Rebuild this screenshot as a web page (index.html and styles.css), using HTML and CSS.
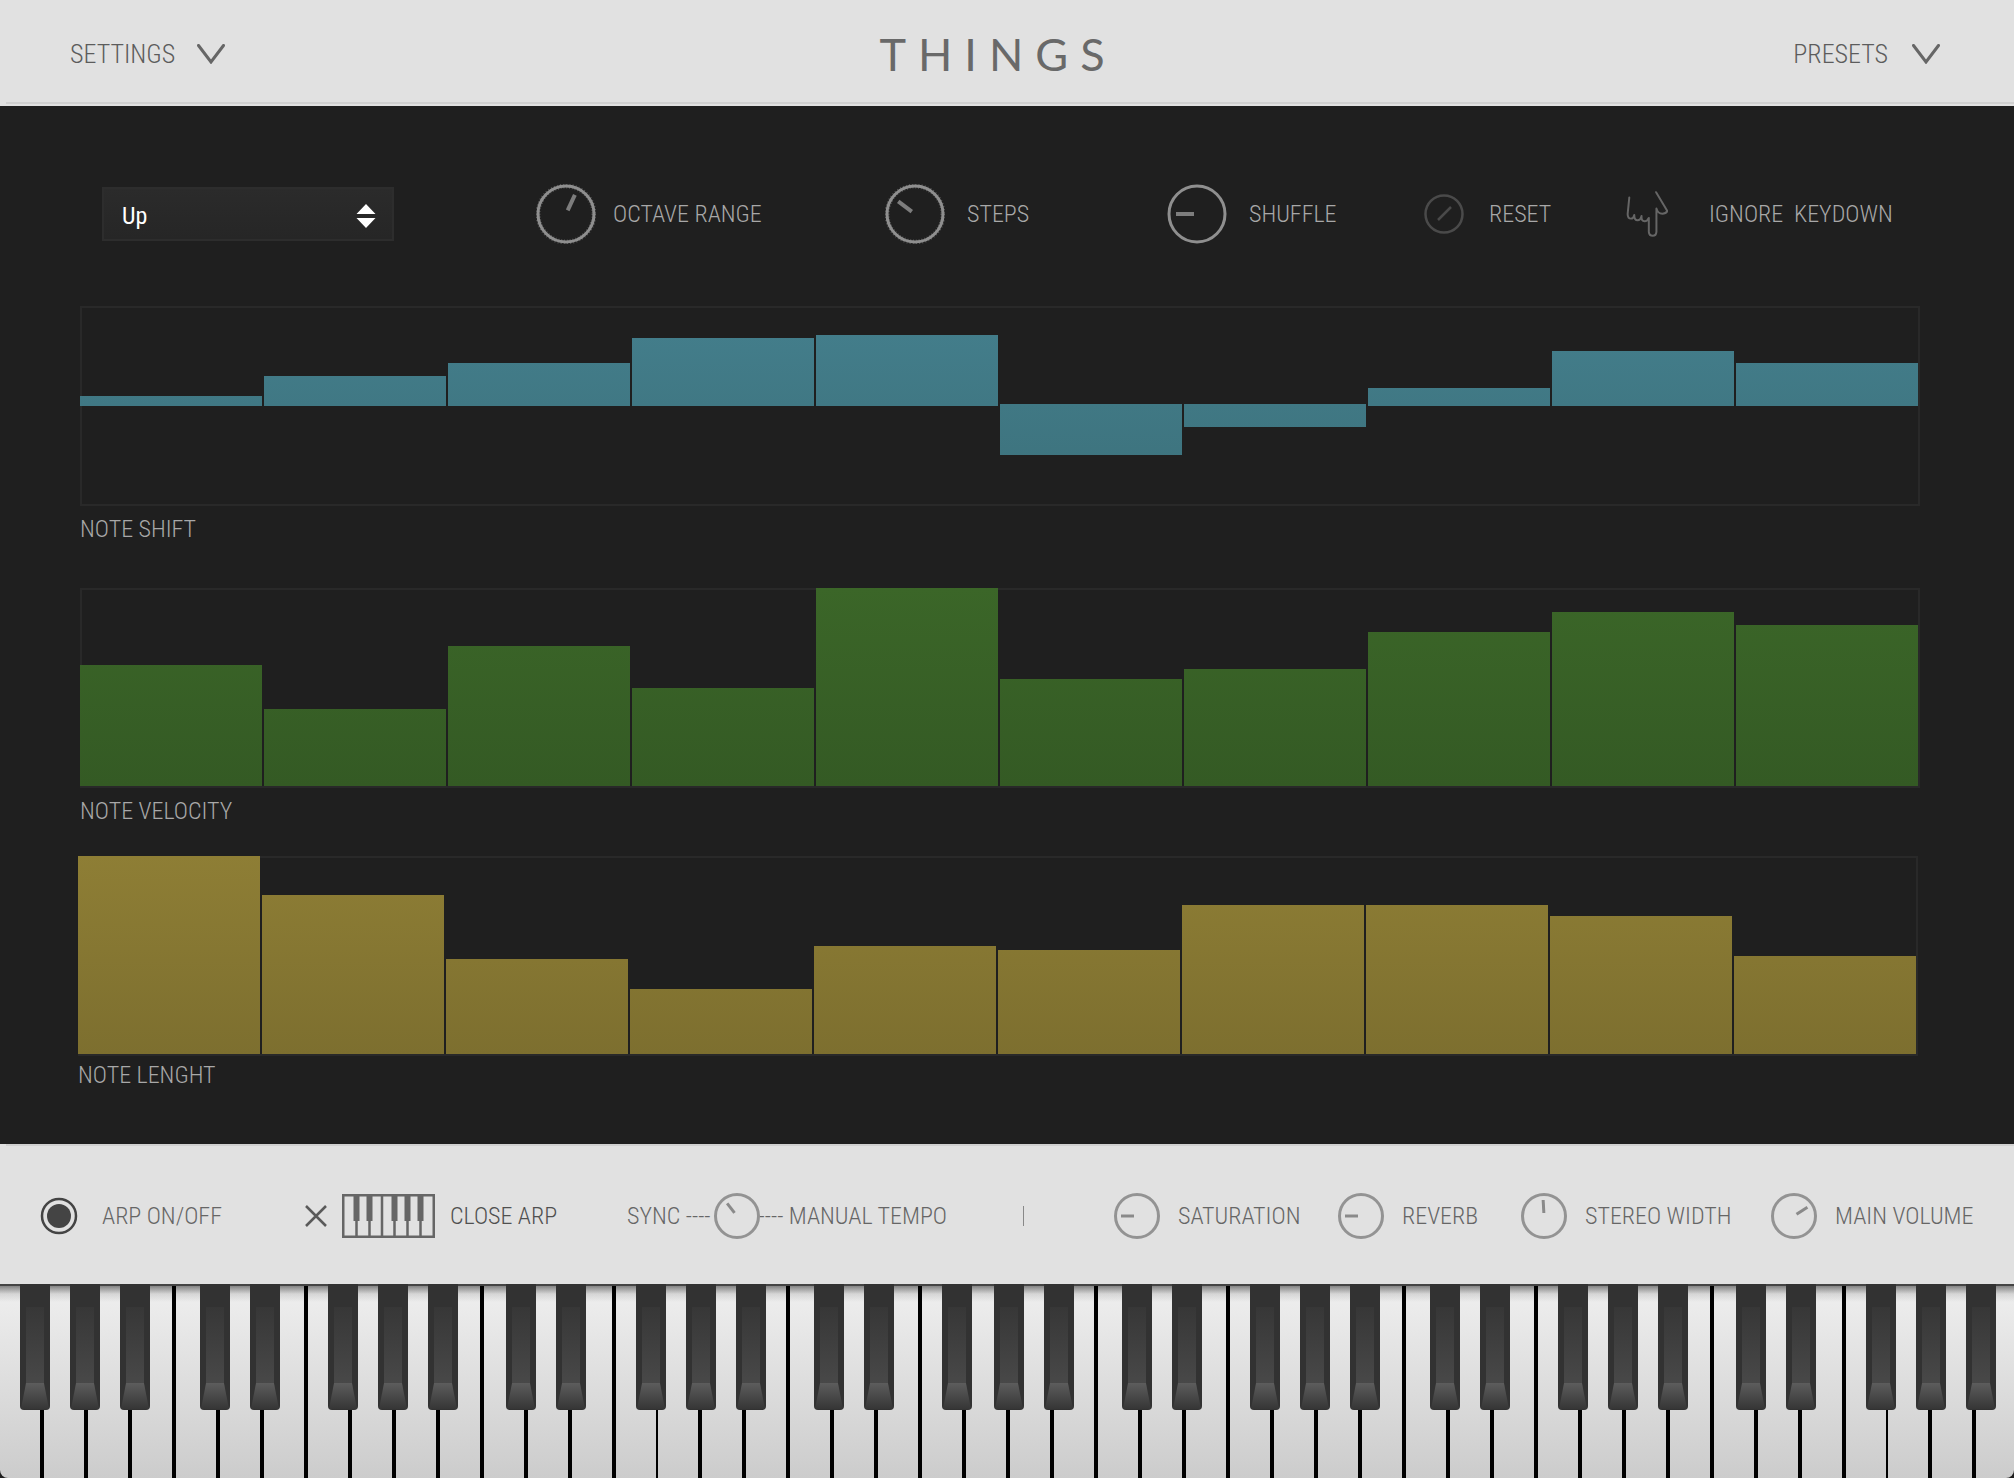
FILE: index.html
```html
<!DOCTYPE html>
<html lang="en">
<head>
  <meta charset="UTF-8">
  <meta name="viewport" content="width=device-width, initial-scale=1.0">
  <title>Things</title>
  <link rel="stylesheet" href="styles.css">
</head>
<body>
  <header class="topbar">
    <button class="menu" type="button">
      SETTINGS
      <svg class="chevron" viewBox="0 0 28 20"><path d="M1.5 1.5 L14 18 L26.5 1.5"/></svg>
    </button>
    <h1 class="logo">THINGS</h1>
    <button class="menu menu-right" type="button">
      PRESETS
      <svg class="chevron" viewBox="0 0 28 20"><path d="M1.5 1.5 L14 18 L26.5 1.5"/></svg>
    </button>
  </header>

  <main class="arp">
    <div class="controls">
      <div class="select-box">
        <select class="mode" aria-label="Mode">
          <option>Up</option>
          <option>Down</option>
        </select>
        <svg class="select-arrows" viewBox="0 0 20 26">
          <path d="M10 1 L19.5 11 H0.5 Z M10 25 L19.5 15 H0.5 Z"/>
        </svg>
      </div>

      <label class="control">
        <span class="dial">
          <svg class="knob" viewBox="-30 -30 60 60">
            <circle r="28"/><circle class="teeth" r="28"/>
            <line y1="-21" y2="-4" transform="rotate(25)"/>
          </svg>
          <input type="range" min="0" max="100" value="60">
        </span>
        OCTAVE RANGE
      </label>

      <label class="control control-wide">
        <span class="dial">
          <svg class="knob" viewBox="-30 -30 60 60">
            <circle r="28"/><circle class="teeth" r="28"/>
            <line y1="-21" y2="-4" transform="rotate(-53)"/>
          </svg>
          <input type="range" min="0" max="100" value="25">
        </span>
        STEPS
      </label>

      <label class="control control-wide">
        <span class="dial">
          <svg class="knob" viewBox="-30 -30 60 60">
            <circle r="28"/>
            <line y1="-21" y2="-3" transform="rotate(-90)"/>
          </svg>
          <input type="range" min="0" max="100" value="0">
        </span>
        SHUFFLE
      </label>

      <button class="control control-reset" type="button">
        <svg class="reset-icon" viewBox="-20 -20 40 40">
          <circle r="18.5"/><line x1="-6" y1="6" x2="7" y2="-7"/>
        </svg>
        RESET
      </button>

      <label class="control control-hand">
        <span class="dial">
          <svg class="hand-icon" viewBox="643 34 130 144">
            <path d="M656 56 L651 106 Q651 120 661 120 Q669 120 671 109 Q671 125 681 125 Q690 125 693 112 Q692 128 702 128 Q711 128 715 118 V160 Q716 172 727 172 Q737 172 738 160 V89 Q742 105 756 105 Q767 105 771 97 L737 40"/>
          </svg>
          <input type="checkbox">
        </span>
        <span class="keep">IGNORE  KEYDOWN</span>
      </label>
    </div>

    <section class="lane">
      <div class="chart chart-shift" id="shift"></div>
      <h2>NOTE SHIFT</h2>
    </section>

    <section class="lane">
      <div class="chart chart-velocity" id="velocity"></div>
      <h2>NOTE VELOCITY</h2>
    </section>

    <section class="lane lane-length">
      <div class="chart chart-length" id="length"></div>
      <h2>NOTE LENGHT</h2>
    </section>
  </main>

  <footer class="bottombar">
    <label class="control control-arp">
      <span class="dial">
        <svg class="power-icon" viewBox="-19 -19 38 38">
          <circle class="ring" r="17"/><circle r="12"/>
        </svg>
        <input type="checkbox" checked>
      </span>
      ARP ON/OFF
    </label>

    <button class="control control-close" type="button">
      <svg class="close-icon" viewBox="0 0 22 22"><path d="M1 1 L21 21 M21 1 L1 21"/></svg>
      <svg class="piano-icon" viewBox="0 0 93 44">
        <rect x="1.25" y="1.25" width="90.5" height="41.5"/>
        <path d="M14.5 1 V43 M27.5 1 V43 M40 1 V43 M52.5 1 V43 M65.5 1 V43 M78.5 1 V43"/>
        <path class="sharps" d="M14.5 1 V27 M27.5 1 V27 M52.5 1 V27 M65.5 1 V27 M78.5 1 V27"/>
      </svg>
      CLOSE ARP
    </button>

    <label class="control control-tempo">
      <span>SYNC ----</span>
      <span class="dial">
        <svg class="knob knob-small" viewBox="-24 -24 48 48">
          <circle r="21.5"/><line y1="-16" y2="-4" transform="rotate(-38)"/>
        </svg>
        <input type="range" min="0" max="100" value="35">
      </span>
      <span>---- MANUAL TEMPO</span>
    </label>

    <span class="divider"></span>

    <label class="control">
      <span class="dial">
        <svg class="knob knob-small" viewBox="-24 -24 48 48">
          <circle r="21.5"/><line y1="-16" y2="-3" transform="rotate(-90)"/>
        </svg>
        <input type="range" min="0" max="100" value="0">
      </span>
      SATURATION
    </label>

    <label class="control">
      <span class="dial">
        <svg class="knob knob-small" viewBox="-24 -24 48 48">
          <circle r="21.5"/><line y1="-16" y2="-3" transform="rotate(-90)"/>
        </svg>
        <input type="range" min="0" max="100" value="0">
      </span>
      REVERB
    </label>

    <label class="control">
      <span class="dial">
        <svg class="knob knob-small" viewBox="-24 -24 48 48">
          <circle r="21.5"/><line y1="-16" y2="-3" transform="rotate(-3)"/>
        </svg>
        <input type="range" min="0" max="100" value="50">
      </span>
      STEREO WIDTH
    </label>

    <label class="control">
      <span class="dial">
        <svg class="knob knob-small" viewBox="-24 -24 48 48">
          <circle r="21.5"/><line y1="-16" y2="-3" transform="rotate(57)"/>
        </svg>
        <input type="range" min="0" max="100" value="75">
      </span>
      MAIN VOLUME
    </label>
  </footer>

  <div class="keyboard">
    <div class="white-keys" id="white"></div>
    <div class="black-keys" id="black"></div>
  </div>

  <script src="script.js"></script>
</body>
</html>
```
FILE: styles.css
```css
* {
  box-sizing: border-box;
}

body {
  margin: 0;
  background: #1f1f1f;
  font-family: "Roboto Condensed", Roboto, sans-serif;
  font-size: 24px;
  font-weight: 300;
  line-height: 30px;
}

button {
  padding: 0;
  border: none;
  background: none;
  font: inherit;
  color: inherit;
  cursor: pointer;
}

svg {
  display: block;
  flex: none;
  fill: none;
}

/* top bar */
.topbar {
  display: grid;
  grid-template-columns: 1fr auto 1fr;
  align-items: center;
  height: 106px;
  padding: 2px 74px 0 70px;
  background: linear-gradient(#d0d0d0, #d0d0d0) 6px 102px / 100% 2px no-repeat #e1e1e1;
  color: #5c5c5c;
}

.menu {
  display: flex;
  align-items: center;
  gap: 22px;
  font-size: 26px;
}

.menu-right {
  justify-self: end;
  gap: 24px;
}

.chevron {
  width: 28px;
  height: 20px;
  stroke: #666;
  stroke-width: 3;
  stroke-linecap: round;
}

.logo {
  margin: 0;
  padding-right: 14px;
  font-family: Lato, sans-serif;
  font-size: 45px;
  font-weight: 400;
  line-height: 56px;
  letter-spacing: 12px;
  color: #696969;
}

/* arpeggiator panel */
.arp {
  padding: 78px 0 54px;
  color: #a8a8a8;
}

.controls {
  display: grid;
  grid-template-columns: 434fr 349fr 282fr 257fr 201fr 389fr;
  align-items: center;
  padding-left: 102px;
}

.control {
  display: flex;
  align-items: center;
  gap: 17px;
  white-space: nowrap;
  cursor: pointer;
}

.control-wide {
  gap: 22px;
}

.control-reset {
  gap: 25px;
}

.control-hand {
  gap: 41px;
}

.keep {
  white-space: pre;
}

.select-box {
  position: relative;
  width: 292px;
}

.mode {
  display: block;
  width: 100%;
  height: 54px;
  padding: 4px 18px 0;
  border: 2px solid #2d2d2d;
  border-radius: 0;
  appearance: none;
  background: linear-gradient(#2b2b2b, #262626);
  color: #fff;
  font: inherit;
  font-weight: 400;
}

.select-arrows {
  position: absolute;
  right: 18px;
  top: 16px;
  width: 20px;
  height: 26px;
  fill: #fff;
  pointer-events: none;
}

/* the real input lies invisibly over its drawing */
.dial {
  position: relative;
  flex: none;
}

.dial input {
  position: absolute;
  inset: 0;
  width: 100%;
  height: 100%;
  margin: 0;
  opacity: 0;
  cursor: pointer;
}

.knob {
  width: 60px;
  height: 60px;
  stroke: #8f8f8f;
  stroke-width: 3;
}

.knob line {
  stroke: #7d7d7d;
  stroke-width: 4;
}

.knob .teeth {
  stroke-width: 5;
  stroke-dasharray: 1 2;
  opacity: 0.5;
}

.knob-small {
  width: 48px;
  height: 48px;
  stroke: #939393;
}

.knob-small line {
  stroke: #8a8a8a;
  stroke-width: 3;
}

.reset-icon {
  width: 40px;
  height: 40px;
  stroke: #4a4a4a;
  stroke-width: 2.5;
}

.hand-icon {
  width: 43px;
  height: 48px;
  stroke: #666;
  stroke-width: 6;
  stroke-linecap: round;
  stroke-linejoin: round;
}

/* step charts */
.lane {
  margin: 44px 94px 0 80px;
}

.controls + .lane {
  margin-top: 62px;
}

.lane-length {
  margin: 30px 96px 0 78px;
}

.lane h2 {
  margin: 8px 0 0;
  font: inherit;
}

.lane-length h2 {
  margin-top: 4px;
}

.chart {
  display: grid;
  grid-auto-flow: column;
  grid-auto-columns: 1fr;
  grid-template-rows: 100%;
  align-items: end;
  gap: 2px;
  height: 200px;
  padding: 0 2px 2px 0;
  box-shadow: inset 0 0 0 2px #292929;
}

.bar {
  background-size: 100% 198px;
  background-position: left bottom;
}

.chart-velocity .bar {
  background-image: linear-gradient(#3b6628, #345a24);
}

.chart-length .bar {
  background-image: linear-gradient(#8e7e35, #7d6f2f);
}

.chart-shift .bar {
  margin-bottom: 98px;
  background-image: linear-gradient(#447f8d, #3c717b);
  background-position: left bottom -98px;
}

.chart-shift .bar.down {
  align-self: start;
  margin: 98px 0 0;
  background-position: left top -98px;
}

/* bottom bar */
.bottombar {
  display: grid;
  grid-template-columns: 265fr 322fr 396fr 90fr 224fr 183fr 250fr 244fr;
  align-items: center;
  height: 140px;
  padding: 4px 0 0 40px;
  background: linear-gradient(#d0d0d0, #d0d0d0) 6px 0 / 100% 2px no-repeat #e1e1e1;
  color: #666;
}

.control-arp {
  gap: 24px;
}

.control-close {
  gap: 15px;
  color: #505050;
}

.control-tempo {
  gap: 0;
}

.control-tempo .dial {
  margin: 0 -2px 0 2px;
}

.divider {
  width: 1px;
  height: 20px;
  background: #888;
}

.power-icon {
  width: 38px;
  height: 38px;
  fill: #444;
}

.power-icon .ring {
  fill: none;
  stroke: #444;
  stroke-width: 2.5;
}

.close-icon {
  width: 22px;
  height: 22px;
  stroke: #5a5a5a;
  stroke-width: 2.5;
}

.piano-icon {
  width: 93px;
  height: 44px;
  stroke: #666;
  stroke-width: 2.5;
}

.piano-icon .sharps {
  stroke-width: 6;
}

/* keyboard */
.keyboard {
  position: relative;
  height: 194px;
  overflow: hidden;
  background: #1f1f1f;
}

.white-keys {
  display: flex;
  height: 100%;
  border-top: 2px solid #444;
  border-radius: 0 0 8px 8px;
  overflow: hidden;
}

.white-key {
  flex: 44 1 44px;
  border-right: 4px solid #000;
  background:
    linear-gradient(rgba(0, 0, 0, 0.45), rgba(0, 0, 0, 0.1) 50%, transparent) top / 100% 16px no-repeat,
    linear-gradient(#efefef, #ccc);
}

.white-key.thin {
  flex: 42 1 42px;
  border-right-width: 2px;
}

.white-key:last-child {
  flex: 38 1 38px;
  border-right: none;
}

.black-key {
  position: absolute;
  top: 0;
  width: 30px;
  height: 126px;
  border-radius: 0 0 4px 4px;
  background: #323232;
}

.black-key::before {
  content: "";
  position: absolute;
  left: 6px;
  right: 6px;
  top: 23px;
  height: 76px;
  background: linear-gradient(#373737, #484848);
}

.black-key::after {
  content: "";
  position: absolute;
  left: 1px;
  right: 1px;
  bottom: 1px;
  height: 26px;
  background: linear-gradient(#5d5d5d, #363636);
  clip-path: polygon(18% 0, 82% 0, 100% 100%, 0 100%);
}
```
FILE: script.js
```js
const RANGE = 198;

const lanes = {
  shift: [10, 30, 43, 68, 71, -51, -23, 18, 55, 43],
  velocity: [121, 77, 140, 98, 198, 107, 117, 154, 174, 161],
  length: [198, 159, 95, 65, 108, 104, 149, 149, 138, 98]
};

for (const id in lanes) {
  const chart = document.getElementById(id);
  lanes[id].forEach(value => {
    const bar = document.createElement('div');
    bar.className = value < 0 ? 'bar down' : 'bar';
    bar.style.height = `${Math.abs(value) / RANGE * 100}%`;
    chart.appendChild(bar);
  });
}

const WHITE_KEYS = 46;
const thinKeys = [14, 42];
const white = document.getElementById('white');

for (let i = 0; i < WHITE_KEYS; i++) {
  const key = document.createElement('div');
  key.className = thinKeys.includes(i) ? 'white-key thin' : 'white-key';
  white.appendChild(key);
}

// left edges of the black keys on a 2014 units wide keyboard
const blackKeys = [
  20, 70, 120, 200, 250, 328, 378, 428, 506, 556,
  636, 686, 736, 814, 864, 942, 994, 1044, 1122, 1172,
  1250, 1300, 1350, 1430, 1480, 1558, 1608, 1658, 1736, 1786,
  1866, 1916, 1966
];
const black = document.getElementById('black');

blackKeys.forEach(x => {
  const key = document.createElement('div');
  key.className = 'black-key';
  key.style.left = `${x / 2014 * 100}%`;
  black.appendChild(key);
});
```
